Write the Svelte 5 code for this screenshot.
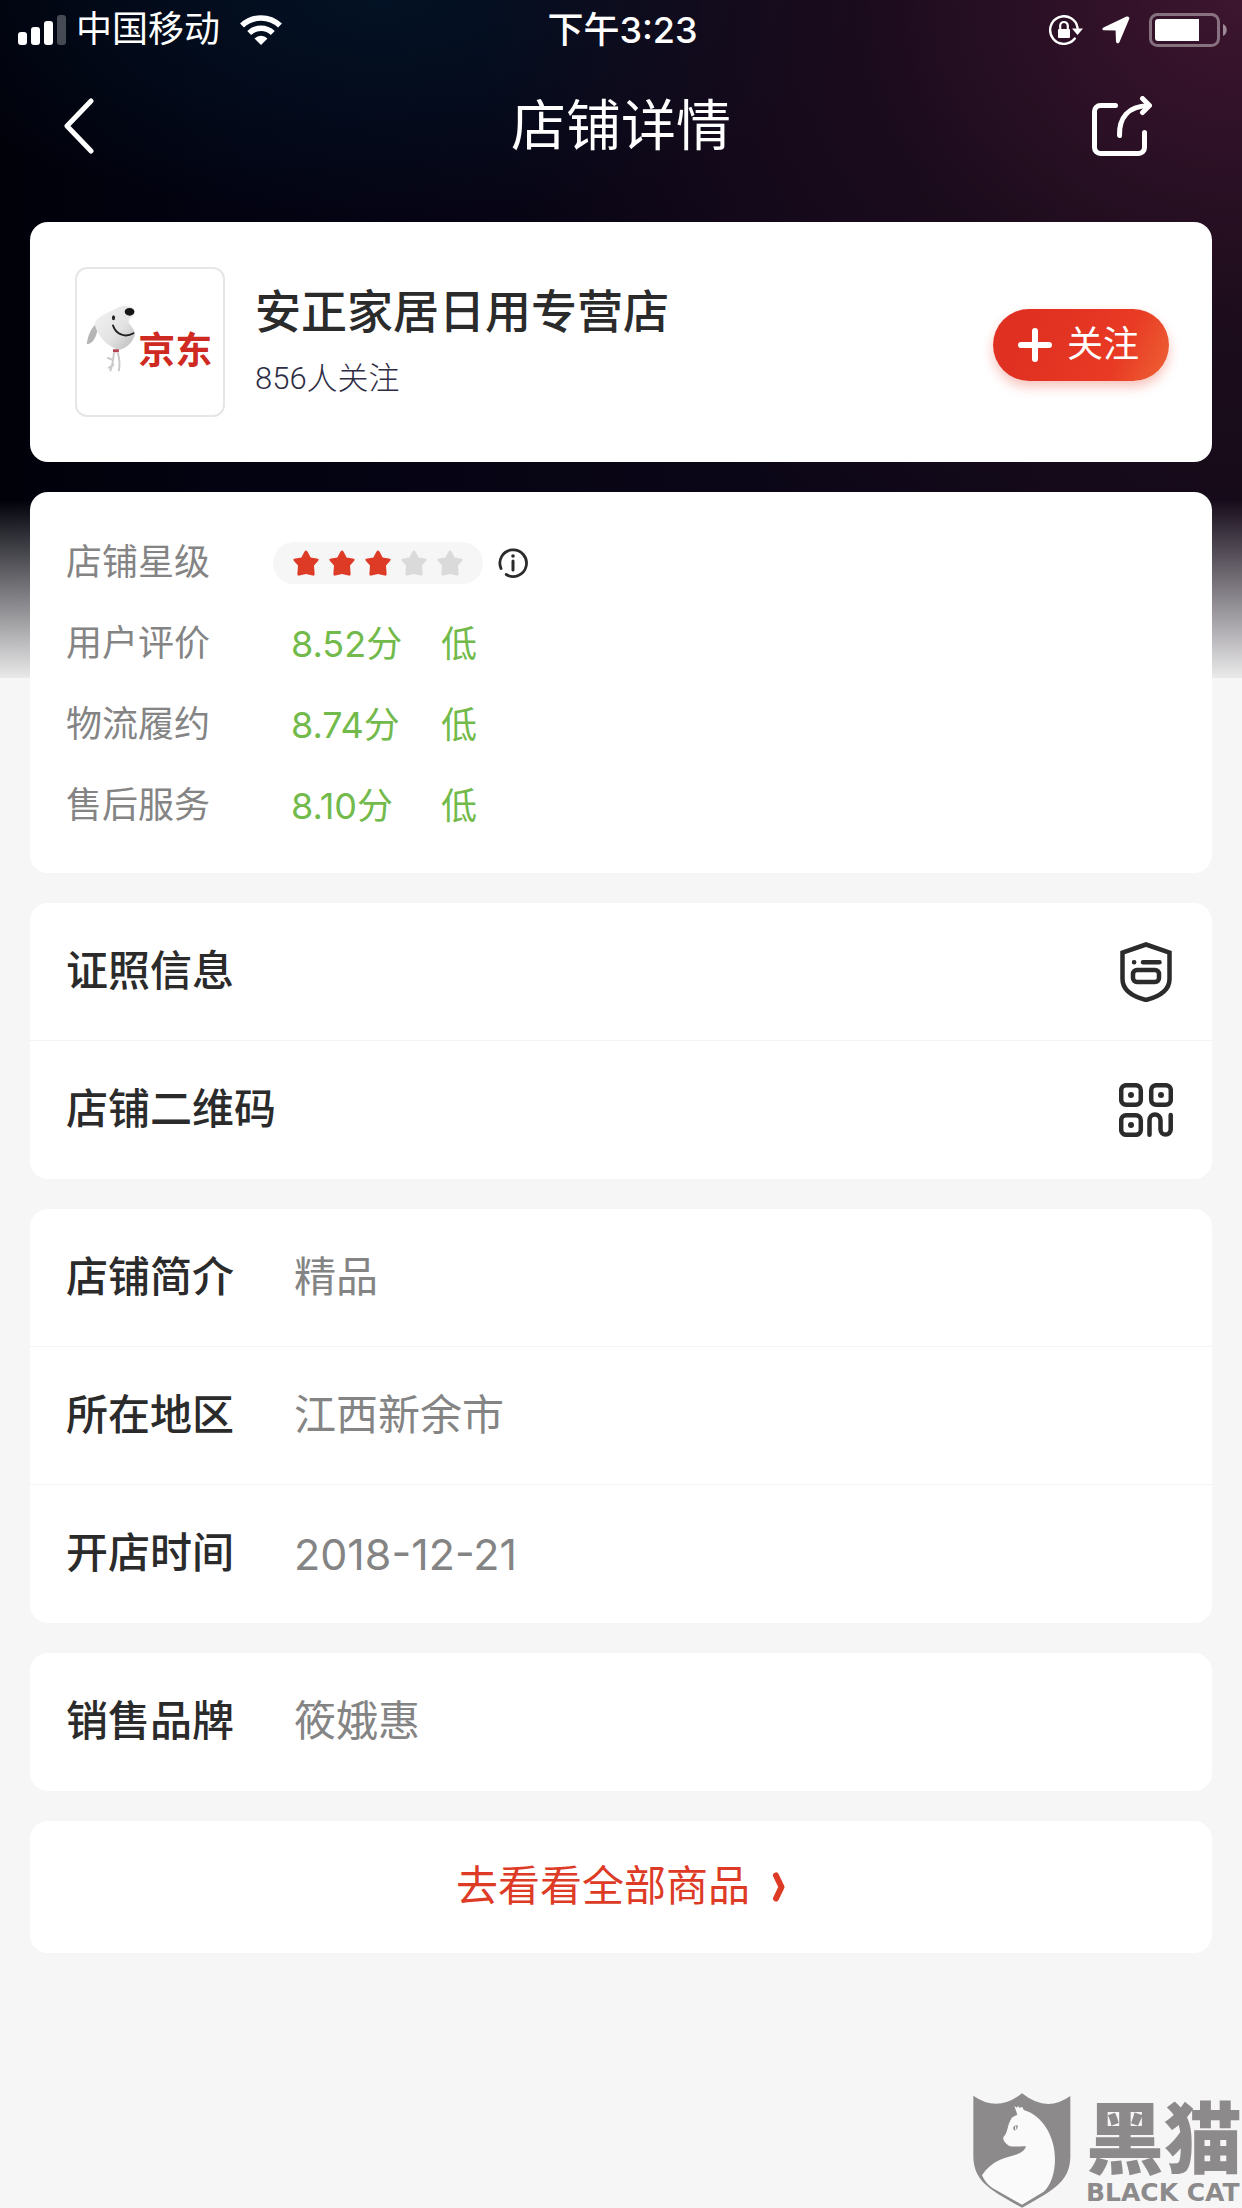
<script lang="ts">
	const shop = {
		name: '安正家居日用专营店',
		followers: 856,
		stars: 3
	};

	const scores = [
		{ label: '用户评价', score: '8.52', level: '低' },
		{ label: '物流履约', score: '8.74', level: '低' },
		{ label: '售后服务', score: '8.10', level: '低' }
	];

	const details = [
		[
			{ label: '店铺简介', value: '精品' },
			{ label: '所在地区', value: '江西新余市' },
			{ label: '开店时间', value: '2018-12-21', numeric: true }
		],
		[{ label: '销售品牌', value: '筱娥惠' }]
	];

	let followed = $state(false);
</script>

<div class="page">
	<div class="status-bar">
		<div class="status-left">
			<svg width="48" height="30" viewBox="0 0 48 30" fill="#fff" aria-hidden="true">
				<rect x="0" y="17" width="9" height="13" rx="3" />
				<rect x="13" y="12" width="9" height="18" rx="3" />
				<rect x="26" y="6" width="9" height="24" rx="3" />
				<rect x="39" y="0" width="9" height="30" rx="3" opacity="0.27" />
			</svg>
			<span class="carrier">中国移动</span>
			<svg class="wifi" width="42" height="30" viewBox="0 0 42 30" aria-hidden="true">
				<g fill="none" stroke="#fff" stroke-width="5.6">
					<path d="M2 10.6A27.5 27.5 0 0 1 40 10.6" />
					<path d="M9.2 18A17 17 0 0 1 32.8 18" />
				</g>
				<path d="M14.5 23.4a9.5 9.5 0 0 1 13 0L21 30z" fill="#fff" />
			</svg>
		</div>
		<span class="time">下午3:23</span>
		<div class="status-right">
			<svg width="34" height="30" viewBox="0 0 34 30" aria-hidden="true">
				<path
					d="M25.8 23.6A13.8 13.8 0 1 1 28.6 13"
					fill="none"
					stroke="#fff"
					stroke-width="2.4"
					stroke-linecap="round"
				/>
				<path d="M23 13.5h11L28.5 20z" fill="#fff" />
				<path d="M11.2 15v-4.2a3.8 3.8 0 0 1 7.6 0V15" fill="none" stroke="#fff" stroke-width="2.2" />
				<rect x="9" y="14" width="12" height="9" rx="1" fill="#fff" />
			</svg>
			<svg width="28" height="28" viewBox="0 0 28 28" aria-hidden="true">
				<path
					d="M1.5 11.5 24.5.6c1.8-.8 3.4.7 2.6 2.6L17.5 26c-.8 2-3.3 1.6-3.5-.5L13.6 14.6 2 14.2c-1.9-.2-2.2-1.9-.5-2.7z"
					fill="#fff"
				/>
			</svg>
			<svg width="78" height="34" viewBox="0 0 78 34" aria-hidden="true">
				<rect x="1.5" y="1.5" width="68" height="31" rx="7" fill="none" stroke="#fff" stroke-opacity="0.4" stroke-width="3" />
				<path d="M9 6h41v22H9a3 3 0 0 1-3-3V9a3 3 0 0 1 3-3z" fill="#fff" />
				<path d="M74 11c5 2 5 10 0 12z" fill="#fff" opacity="0.5" />
			</svg>
		</div>
	</div>

	<header class="nav">
		<button class="icon-btn" aria-label="返回">
			<svg width="30" height="56" viewBox="0 0 30 56" fill="none" aria-hidden="true">
				<path d="M27 3 3 28 27 53" stroke="#fff" stroke-width="5" stroke-linecap="round" stroke-linejoin="round" />
			</svg>
		</button>
		<h1>店铺详情</h1>
		<button class="icon-btn share" aria-label="分享">
			<svg
				width="60"
				height="60"
				viewBox="0 0 60 60"
				fill="none"
				stroke="#fff"
				stroke-width="5"
				stroke-linecap="round"
				stroke-linejoin="round"
				aria-hidden="true"
			>
				<path d="M23.5 9.5H8.5a6 6 0 0 0-6 6v36a6 6 0 0 0 6 6h38a6 6 0 0 0 6-6V36.5" />
				<path d="M27.5 39.5C27 22 36 10 56 9.8" />
				<path d="M50.5 2.5 57.5 9.5 50.5 16.5" />
			</svg>
		</button>
	</header>

	<main>
		<section class="card shop">
			<svg class="logo" viewBox="0 0 150 150" role="img" aria-label="店铺头像">
				<defs>
					<linearGradient id="fur" x1="0" y1="0" x2="1" y2="1">
						<stop offset="0" stop-color="#f4f4f4" />
						<stop offset="0.6" stop-color="#e2e2e2" />
						<stop offset="1" stop-color="#b9b9b9" />
					</linearGradient>
				</defs>
				<path d="M20 56c-6 5-9 13-10 21 5 1 10-6 11-15z" fill="#b5b5b5" />
				<path
					d="M18 56c3-7 11-10 18-13 5-3 10-6 15-5 6 0 9 5 7 9-3 3-5 4-5 8 3 5 8 8 6 14-3 8-9 12-15 14-11-2-23-13-26-27z"
					fill="url(#fur)"
				/>
				<ellipse cx="54" cy="44" rx="5" ry="4" fill="#151515" />
				<ellipse cx="37.5" cy="50" rx="1.6" ry="2.6" fill="#222" />
				<path d="M37 58c3 9 12 13 21 8" fill="none" stroke="#222" stroke-width="2" stroke-linecap="round" />
				<path d="M37 84h6" stroke="#b04450" stroke-width="3" />
				<path d="M38 86c-1 7-1 13-4 19M42 86c2 7 2 13 1 19M38 94l-7-3M38 98l-6 4" fill="none" stroke="#c9c9c9" stroke-width="2" />
				<text x="63" y="98" class="logo-text">京东</text>
			</svg>
			<div class="shop-info">
				<h2>{shop.name}</h2>
				<p>{shop.followers}人关注</p>
			</div>
			<button class="follow" aria-pressed={followed} onclick={() => (followed = !followed)}>
				<svg width="34" height="34" viewBox="0 0 34 34" aria-hidden="true">
					<path d="M17 3v28M3 17h28" stroke="#fff" stroke-width="6" stroke-linecap="round" />
				</svg>
				<span>关注</span>
			</button>
		</section>

		<section class="card ratings">
			<div class="rating-row">
				<span class="rating-label">店铺星级</span>
				<div class="stars" role="img" aria-label="{shop.stars}星">
					{#each { length: 5 } as _, i}
						<svg width="26" height="26" viewBox="0 0 26 26" aria-hidden="true">
							<path
								class={i < shop.stars ? 'star on' : 'star'}
								d="M13 .5c1 0 1.5 1 2 2l2.6 5 6.2 1c2 .4 2.4 1.3 1.2 2.5L21 15.5l.6 8.5c0 1.6-.8 1.9-2 1.5L13 24l-6.6 1.5c-1.2.4-2 0-2-1.500l.6-8.500L1 11C-.2 9.800.2 8.900 2.200 8.500l6.200-1 2.600-5c.5-1 1-2 2-2z"
							/>
						</svg>
					{/each}
				</div>
				<button class="icon-btn info" aria-label="星级说明">
					<svg width="30" height="30" viewBox="0 0 30 30" fill="none" stroke="#2b2b2b" aria-hidden="true">
						<path d="M3 20.5A13.3 13.3 0 1 1 8.2 26.5" stroke-width="2.8" stroke-linecap="round" />
						<path d="M15 13v9" stroke-width="3" stroke-linecap="round" />
						<circle cx="15" cy="8" r="1.8" fill="#2b2b2b" stroke="none" />
					</svg>
				</button>
			</div>
			{#each scores as item}
				<div class="rating-row">
					<span class="rating-label">{item.label}</span>
					<span class="score">{item.score}分</span>
					<span class="level">{item.level}</span>
				</div>
			{/each}
		</section>

		<section class="card">
			<button class="row action">
				<span class="row-label">证照信息</span>
				<svg
					width="54"
					height="60"
					viewBox="0 0 54 60"
					fill="none"
					stroke="#2b2b2b"
					stroke-width="4.5"
					stroke-linecap="round"
					aria-hidden="true"
				>
					<path d="M27 2.5 50.5 10.5V37c0 11-10 17.5-23.5 21C13.5 54.5 3.5 48 3.5 37V10.5z" />
					<path d="M24 20.3h16.5M15 20.3h.2" />
					<rect x="14" y="28" width="26" height="12" rx="4" />
				</svg>
			</button>
			<button class="row action">
				<span class="row-label">店铺二维码</span>
				<svg
					width="54"
					height="54"
					viewBox="0 0 54 54"
					fill="none"
					stroke="#2b2b2b"
					stroke-width="4.5"
					stroke-linecap="round"
					aria-hidden="true"
				>
					<rect x="2.2" y="2.2" width="19.6" height="19.6" rx="5" />
					<rect x="32.2" y="2.2" width="19.6" height="19.6" rx="5" />
					<rect x="2.2" y="32.2" width="19.6" height="19.6" rx="5" />
					<path d="M30.5 51.7V37a5.5 5.5 0 0 1 11 0V46.5a5.1 5.1 0 0 0 10.2 0V32" />
					<g fill="#2b2b2b" stroke="none">
						<circle cx="12" cy="12" r="3" />
						<circle cx="42" cy="12" r="3" />
						<circle cx="12" cy="42" r="3" />
					</g>
				</svg>
			</button>
		</section>

		{#each details as group}
			<dl class="card">
				{#each group as item}
					<div class="row">
						<dt class="row-label">{item.label}</dt>
						<dd class:numeric={item.numeric}>{item.value}</dd>
					</div>
				{/each}
			</dl>
		{/each}

		<a class="card all-goods" href="#goods">
			<span>去看看全部商品</span>
			<svg width="14" height="30" viewBox="0 0 14 30" fill="none" aria-hidden="true">
				<path d="M4 3.5 9.5 15 4 26.5" stroke="#dd3b26" stroke-width="6" stroke-linecap="round" stroke-linejoin="round" />
			</svg>
		</a>
	</main>

	<footer class="brand">
		<svg width="98" height="115" viewBox="99 98 294 345" aria-hidden="true">
			<path
				d="M100 106Q173 158 246 99Q320 158 391 107V290C389 362 345 388 246 442C148 388 102 362 100 290Z"
				fill="#8d8a8b"
			/>
			<path
				d="M223 137l8 5 3-5 4 5 9-2 4 9C310 165 345 232 345 295c0 45-13 80-34 99L246 433 156 382C140 371 131 356 126 345c27-42 65-52 99-61 20-6 30-15 33-26-19-1-34 3-50-1-12-7-20-17-18-26 15-15 11-37 25-58 6-6 13-8 17-10z"
				fill="#fafafa"
			/>
			<path d="M219 203c2-6 7-8 14-8 1 8-2 14-10 16z" fill="#8d8a8b" />
			<ellipse cx="227" cy="203" rx="2" ry="6" fill="#fafafa" />
		</svg>
		<div class="brand-text">
			<span class="brand-cn">黑猫</span>
			<span class="brand-en">BLACK CAT</span>
		</div>
	</footer>
</div>

<style>
	:global(body) {
		background: #f6f6f6;
	}

	.page {
		display: flex;
		flex-direction: column;
		min-height: 100vh;
		overflow: hidden;
		font-family: Roboto, 'Noto Sans CJK SC', sans-serif;
		color: #2b2b2b;
		background:
			linear-gradient(to bottom, rgba(246, 246, 246, 0) 500px, rgba(246, 246, 246, 0.95) 678px),
			radial-gradient(ellipse 760px 620px at 100% 0, #3d152f, rgba(38, 15, 32, 0.55) 50%, rgba(20, 10, 26, 0)),
			radial-gradient(ellipse 500px 220px at 380px 0, #031224, rgba(3, 16, 32, 0)),
			linear-gradient(to right, #01010a, #030312 20%, #0b0617 60%, #120a18);
		background-size: 100% 678px;
		background-repeat: no-repeat;
		background-color: #f6f6f6;
	}

	h1,
	h2,
	p,
	dl,
	dd {
		margin: 0;
	}

	button {
		padding: 0;
		border: none;
		background: none;
		color: inherit;
		font: inherit;
		cursor: pointer;
	}

	svg {
		display: block;
		flex: none;
	}

	.status-bar,
	.nav {
		display: grid;
		grid-template-columns: 1fr auto 1fr;
		align-items: center;
		color: #fff;
	}

	.status-bar {
		height: 60px;
		padding: 0 15px 0 18px;
		font-size: 36px;
		line-height: 60px;
	}

	.status-left,
	.status-right {
		display: flex;
		align-items: center;
	}

	.status-left {
		gap: 10px;
	}

	.wifi {
		margin-left: 10px;
	}

	.status-right {
		justify-content: flex-end;
		gap: 19px;
	}

	.time {
		font-family: Inter, 'Noto Sans CJK SC', sans-serif;
		font-weight: 500;
	}

	.nav {
		height: 132px;
		padding: 0 64px;
	}

	.nav h1 {
		font-size: 55px;
		font-weight: 400;
		line-height: 72px;
	}

	.share {
		justify-self: end;
		padding-right: 26px;
	}

	main {
		display: flex;
		flex-direction: column;
		gap: 30px;
		padding: 30px;
	}

	.card {
		border-radius: 18px;
		background: #fff;
	}

	.shop {
		display: flex;
		align-items: flex-start;
		padding: 45px 43px 45px 45px;
	}

	.logo {
		box-sizing: border-box;
		width: 150px;
		height: 150px;
		border: 2px solid #e6e6e6;
		border-radius: 12px;
	}

	.logo-text {
		font-family: 'Noto Sans CJK SC', sans-serif;
		font-size: 38px;
		font-weight: 700;
		fill: #cf2a22;
	}

	.shop-info {
		flex: 1;
		padding: 15px 0 0 30px;
	}

	.shop-info h2 {
		font-size: 46px;
		font-weight: 500;
		line-height: 60px;
	}

	.shop-info p {
		margin-top: 16px;
		font-size: 31px;
		font-weight: 300;
		line-height: 42px;
		color: #2e2d45;
	}

	.follow {
		display: flex;
		align-items: center;
		gap: 15px;
		height: 72px;
		margin-top: 42px;
		padding: 0 30px 0 25px;
		border-radius: 36px;
		background: linear-gradient(115deg, #df3021 20%, #e83a24 70%, #ee6334);
		box-shadow: 0 6px 12px rgba(232, 58, 36, 0.3);
		font-size: 36px;
		line-height: 44px;
		color: #fff;
	}

	.ratings {
		padding: 30px 36px 27px;
		font-size: 36px;
		line-height: 44px;
	}

	.rating-row {
		display: flex;
		align-items: center;
		height: 81px;
	}

	.rating-label {
		width: 207px;
		color: #848484;
	}

	.stars {
		display: flex;
		align-items: center;
		justify-content: center;
		gap: 10px;
		width: 210px;
		height: 42px;
		border-radius: 21px;
		background: #f6f6f6;
	}

	.star {
		fill: #dadada;
	}

	.star.on {
		fill: #dd3b26;
	}

	.info {
		margin-left: 15px;
	}

	.score {
		box-sizing: border-box;
		width: 168px;
		padding-left: 18px;
	}

	.score,
	.level {
		font-family: Inter, 'Noto Sans CJK SC', sans-serif;
		color: #72ba4b;
	}

	.row {
		display: flex;
		align-items: center;
		box-sizing: border-box;
		width: 100%;
		height: 138px;
		padding: 0 36px;
		font-size: 42px;
		line-height: 60px;
	}

	.row:not(:last-child) {
		border-bottom: 1px solid #f3f3f3;
	}

	.row-label {
		width: 228px;
		font-weight: 500;
	}

	.action {
		justify-content: space-between;
		padding-right: 39px;
		text-align: left;
	}

	dd {
		color: #848484;
	}

	.numeric {
		font-family: Inter, sans-serif;
		font-size: 43px;
	}

	.all-goods {
		display: flex;
		align-items: center;
		justify-content: center;
		gap: 22px;
		height: 132px;
		font-size: 42px;
		line-height: 60px;
		color: #dd3b26;
		text-decoration: none;
	}

	.brand {
		display: flex;
		align-items: flex-end;
		gap: 15px;
		align-self: flex-end;
		margin-top: auto;
		color: #8d8a8b;
	}

	.brand-text {
		display: flex;
		flex-direction: column;
		padding-bottom: 3px;
		white-space: nowrap;
	}

	.brand-cn {
		font-size: 78px;
		font-weight: 900;
		line-height: 78px;
	}

	.brand-en {
		font-family: 'DejaVu Sans', sans-serif;
		font-size: 25px;
		font-weight: 700;
		line-height: 24px;
	}
</style>
